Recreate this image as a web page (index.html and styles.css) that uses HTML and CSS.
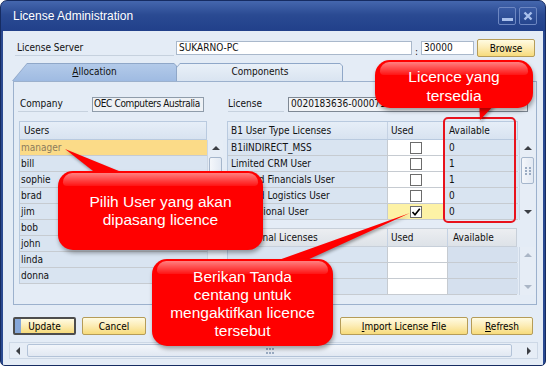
FILE: index.html
```html
<!DOCTYPE html>
<html lang="en">
<head>
    <meta charset="UTF-8">
    <title>License Administration</title>
    <link rel="stylesheet" href="styles.css">
</head>
<body>
    <div class="window">
        <div class="titlebar">
            <span class="title">License Administration</span>
            <div class="caption-btn"><span class="min-glyph"></span></div>
            <div class="caption-btn">
                <svg width="10" height="10" viewBox="0 0 10 10"><path d="M1.5 1.5 L8.5 8.5 M8.5 1.5 L1.5 8.5" stroke="#a9c0ec" stroke-width="2.4"/></svg>
            </div>
        </div>

        <div class="client">
            <div class="server-row">
                <div class="field-label server-label">License Server</div>
                <div class="field server-field">SUKARNO-PC</div>
                <div class="colon">:</div>
                <div class="field port-field">30000</div>
                <button class="btn browse">Browse</button>
            </div>

            <div class="tabs">
                <div class="tab active"><div class="tab-inner"><u>A</u>llocation</div></div>
                <div class="tab"><div class="tab-inner">Components</div></div>
            </div>

            <div class="panel">
                <div class="company-row">
                    <div class="field-label co-label">Company</div>
                    <div class="field co-field">OEC Computers Australia</div>
                    <div class="field-label lic-label">License</div>
                    <div class="field lic-field">0020183636-0000713142</div>
                </div>

                <div class="lists">
                    <div class="users">
                        <div class="head users-head">Users</div>
                        <div class="user-list">
                            <div class="row selected">manager</div>
                            <div class="row">bill</div>
                            <div class="row">sophie</div>
                            <div class="row">brad</div>
                            <div class="row">jim</div>
                            <div class="row">bob</div>
                            <div class="row">john</div>
                            <div class="row">linda</div>
                            <div class="row">donna</div>
                        </div>
                        <div class="vscroll">
                            <div class="arrow"><span class="tri up"></span></div>
                            <div class="thumb users-thumb"></div>
                            <div class="track"></div>
                            <div class="arrow"><span class="tri down"></span></div>
                        </div>
                    </div>

                    <div class="licenses">
                        <div class="lic-table">
                            <div class="head cols">
                                <span class="cell">B1 User Type Licenses</span>
                                <span class="cell">Used</span>
                                <span class="cell avail">Available</span>
                            </div>
                            <div class="lic-rows">
                                <div class="cols lrow"><span class="cell">B1iINDIRECT_MSS</span><span class="cell used"><span class="check"></span></span><span class="cell avail">0</span></div>
                                <div class="cols lrow"><span class="cell">Limited CRM User</span><span class="cell used"><span class="check"></span></span><span class="cell avail">1</span></div>
                                <div class="cols lrow"><span class="cell">Limited Financials User</span><span class="cell used"><span class="check"></span></span><span class="cell avail">1</span></div>
                                <div class="cols lrow"><span class="cell">Limited Logistics User</span><span class="cell used"><span class="check"></span></span><span class="cell avail">0</span></div>
                                <div class="cols lrow"><span class="cell">Professional User</span><span class="cell used on"><span class="check"><svg width="10" height="10" viewBox="0 0 10 10"><path d="M1.5 5 L4 7.8 L8.8 1.8" fill="none" stroke="#000" stroke-width="1.7"/></svg></span></span><span class="cell avail">0</span></div>
                            </div>
                            <div class="vscroll">
                                <div class="arrow"><span class="tri up"></span></div>
                                <div class="thumb lic-thumb">
                                    <svg width="6" height="8" viewBox="0 0 6 8"><g fill="#9aabc2"><rect x="0" y="0" width="2" height="2"/><rect x="4" y="0" width="2" height="2"/><rect x="0" y="3" width="2" height="2"/><rect x="4" y="3" width="2" height="2"/><rect x="0" y="6" width="2" height="2"/><rect x="4" y="6" width="2" height="2"/></g></svg>
                                </div>
                                <div class="track"></div>
                                <div class="arrow"><span class="tri down"></span></div>
                            </div>
                        </div>

                        <div class="lic-table extra">
                            <div class="head cols">
                                <span class="cell">Additional Licenses</span>
                                <span class="cell">Used</span>
                                <span class="cell avail">Available</span>
                            </div>
                            <div class="lic-rows">
                                <div class="cols lrow"><span class="cell"></span><span class="cell used"></span><span class="cell avail"></span></div>
                                <div class="cols lrow"><span class="cell"></span><span class="cell used"></span><span class="cell avail"></span></div>
                                <div class="cols lrow"><span class="cell"></span><span class="cell used"></span><span class="cell avail"></span></div>
                            </div>
                            <div class="vscroll">
                                <div class="arrow"><span class="tri up off"></span></div>
                                <div class="track"></div>
                                <div class="arrow"><span class="tri down off"></span></div>
                            </div>
                        </div>
                    </div>
                </div>
            </div>

            <div class="actions">
                <div class="btn-group">
                    <button class="btn default update">Update</button>
                    <button class="btn cancel">Cancel</button>
                </div>
                <div class="btn-group tight">
                    <button class="btn import"><u>I</u>mport License File</button>
                    <button class="btn refresh"><u>R</u>efresh</button>
                </div>
            </div>

            <div class="hscroll">
                <div class="h-arrow"><span class="tri left"></span></div>
                <div class="h-thumb">
                    <svg width="8" height="6" viewBox="0 0 8 6"><g fill="#9aabc2"><rect x="0" y="0" width="2" height="2"/><rect x="3" y="0" width="2" height="2"/><rect x="6" y="0" width="2" height="2"/><rect x="0" y="4" width="2" height="2"/><rect x="3" y="4" width="2" height="2"/><rect x="6" y="4" width="2" height="2"/></g></svg>
                </div>
                <div class="h-arrow"><span class="tri right"></span></div>
            </div>
        </div>

        <!-- annotations drawn over the dialog -->
        <div class="highlight"></div>
        <svg class="tails" width="546" height="366" viewBox="0 0 546 366">
            <g fill="#ff0000">
                <polygon points="479,98 501,98 480,120"/>
                <polygon points="65,149 102,178 136,178"/>
                <polygon points="410,213 262,266 294,266"/>
            </g>
        </svg>
        <div class="callout c1">Licence yang<br>tersedia</div>
        <div class="callout c2">Pilih User yang akan<br>dipasang licence</div>
        <div class="callout c3">Berikan Tanda<br>centang untuk<br>mengaktifkan licence<br>tersebut</div>
    </div>
</body>
</html>
```

FILE: styles.css
```css
* {
    box-sizing: border-box;
}
body {
    margin: 0;
    width: 546px;
    height: 366px;
    overflow: hidden;
    background: #ffffff;
    font-family: "DejaVu Sans Condensed", "Liberation Sans", sans-serif;
    font-size: 10px;
    color: #111;
}
.window {
    position: relative;
    width: 546px;
    height: 366px;
    border: 1px solid #162c62;
    border-radius: 7px 7px 5px 5px;
    background: linear-gradient(#4567ae, #2a4a92 14px, #21408a 30px, #2a4a91 31px);
    overflow: hidden;
}

/* Title bar */
.titlebar {
    height: 30px;
    display: flex;
    align-items: center;
    padding: 0 8px 0 12px;
}
.title {
    flex: 1;
    color: #fff;
    font-family: "Liberation Sans", sans-serif;
    font-size: 12px;
}
.caption-btn {
    width: 18px;
    height: 18px;
    margin-left: 3px;
    border: 1px solid #6d87c2;
    border-radius: 2px;
    background: linear-gradient(#3a5ba4, #25458d);
    display: flex;
    align-items: center;
    justify-content: center;
}
.min-glyph {
    width: 11px;
    height: 3px;
    background: #a9c0ec;
    align-self: flex-end;
    margin-bottom: 3px;
}

/* Client area */
.client {
    margin: 0 2px;
    height: 334px;
    background: #e4ecf6;
    overflow: hidden;
}
.server-row {
    display: flex;
    align-items: center;
    height: 18px;
    margin: 8px 0 0 12px;
}
.field-label {
    height: 15px;
    line-height: 14px;
    padding-left: 2px;
    border-bottom: 1px solid #c6d1de;
}
.server-label {
    width: 159px;
}
.field {
    height: 14px;
    line-height: 12px;
    padding-left: 2px;
    border: 1px solid #a9b8cb;
    background: #fff;
    white-space: nowrap;
    overflow: hidden;
}
.server-field {
    margin-left: 2px;
    width: 236px;
}
.colon {
    width: 9px;
    text-align: center;
    align-self: flex-end;
}
.port-field {
    width: 53px;
}

/* Buttons */
.btn {
    height: 18px;
    padding: 0;
    border: 1px solid #b59c58;
    border-radius: 2px;
    background: linear-gradient(#fffbe2, #fcedb8 45%, #f7db7b);
    font-family: inherit;
    font-size: 10px;
    color: #000;
}
.browse {
    margin-left: 3px;
    width: 58px;
}

/* Tabs */
.tabs {
    display: flex;
    height: 18px;
    margin: 6px 0 0 9px;
}
.tab {
    position: relative;
    height: 18px;
    padding: 1px 1px 0 1px;
    background: #8fa7c8;
    clip-path: polygon(15px 0, calc(100% - 3px) 0, 100% 3px, 100% 100%, 0 100%);
}
.tab-inner {
    height: 17px;
    line-height: 16px;
    text-align: center;
    background: linear-gradient(#e9f0f8, #d9e4f1);
    clip-path: polygon(14px 0, calc(100% - 2px) 0, 100% 2px, 100% 100%, 0 100%);
}
.tab.active {
    z-index: 2;
    width: 165px;
}
.tab.active .tab-inner {
    background: linear-gradient(#b3cae9, #9fbbe2);
}
.tab:not(.active) {
    width: 178px;
    margin-left: -12px;
}
.tab:not(.active) .tab-inner {
    padding-left: 12px;
}

/* Panel */
.panel {
    height: 224px;
    margin: 0 6px 0 10px;
    padding: 14px 0 0 4px;
    border: 1px solid #9cb1cd;
}
.company-row {
    display: flex;
    align-items: center;
    height: 16px;
}
.co-label {
    width: 70px;
    margin-right: 4px;
}
.co-field {
    width: 112px;
    height: 15px;
    padding-left: 1px;
    letter-spacing: -0.35px;
    background: #eef1f5;
    border-color: #8f9caa;
}
.lic-label {
    width: 56px;
    margin: 0 4px 0 24px;
    padding-left: 0;
}
.lic-field {
    width: 240px;
    height: 15px;
    background: #f1f3f6;
    border-color: #7e8894;
}
.lists {
    display: flex;
    gap: 4px;
    margin-top: 9px;
    padding-left: 1px;
}

/* Users list */
.users {
    display: grid;
    grid-template-columns: 188px 16px;
    grid-template-rows: 19px 144px;
}
.head {
    height: 19px;
    line-height: 17px;
    border: 1px solid #b9cadf;
    background: linear-gradient(#e6eef8, #d8e3f0);
}
.users-head {
    padding-left: 4px;
}
.user-list {
    grid-column: 1;
    border-left: 1px solid #b9cadf;
}
.row {
    height: 16px;
    line-height: 15px;
    padding-left: 1px;
    background: #d9e4f1;
    border-bottom: 1px solid #c6cbd1;
}
.row.selected {
    background: #fbdb88;
    color: #8c7c5c;
}

/* Scrollbars */
.vscroll {
    grid-column: 2;
    grid-row: 2;
    display: flex;
    flex-direction: column;
    background: #e6edf6;
    border-left: 1px solid #ccd7e5;
}
.arrow {
    height: 16px;
    display: flex;
    align-items: center;
    justify-content: center;
}
.track {
    flex: 1;
}
.thumb {
    margin: 1px 1px 0 1px;
    border: 1px solid #a5b6cc;
    border-radius: 2px;
    background: linear-gradient(90deg, #f4f7fb, #e2e9f3);
    display: flex;
    align-items: center;
    justify-content: center;
}
.users-thumb {
    height: 34px;
}
.lic-thumb {
    height: 27px;
}
.tri {
    width: 0;
    height: 0;
    border: 4px solid transparent;
}
.tri.up {
    border-bottom: 4px solid #3c3f44;
    border-top-width: 0;
}
.tri.down {
    border-top: 4px solid #3c3f44;
    border-bottom-width: 0;
}
.tri.up.off {
    border-bottom-color: #aab6c6;
}
.tri.down.off {
    border-top-color: #aab6c6;
}
.tri.left {
    border-right: 4px solid #3c3f44;
    border-left-width: 0;
}
.tri.right {
    border-left: 4px solid #3c3f44;
    border-right-width: 0;
}

/* License tables */
.licenses {
    width: 308px;
}
.lic-table {
    display: grid;
    grid-template-columns: 291px 16px;
    column-gap: 1px;
}
.cols {
    display: grid;
    grid-template-columns: 160px 56px 75px;
}
.head.cols {
    padding: 0;
}
.head .cell {
    border-right: 1px solid #c5d2e3;
}
.head .cell:last-child {
    border-right: none;
}
.cell {
    padding-left: 3px;
    white-space: nowrap;
    overflow: hidden;
}
.cell.avail {
    padding-left: 5px;
}
.lic-rows {
    grid-column: 1;
    border-left: 1px solid #b9cadf;
}
.lrow {
    height: 16px;
    line-height: 15px;
    border-bottom: 1px solid #c6cbd1;
}
.lrow .cell {
    background: #d9e4f1;
    border-right: 1px solid #c6cbd1;
}
.lrow .cell.used {
    background: #fff;
    display: flex;
    align-items: center;
    justify-content: center;
    padding: 0;
}
.lrow .cell.used.on {
    background: #fdf2a6;
}
.lrow .cell:last-child {
    border-right: none;
}
.check {
    width: 12px;
    height: 12px;
    border: 1px solid #6c6c6c;
    background: #fff;
    display: flex;
    align-items: center;
    justify-content: center;
}
.extra {
    margin-top: 8px;
    column-gap: 2px;
    grid-template-columns: 290px 16px;
}
.extra .cols {
    grid-template-columns: 160px 60px 70px;
}
.extra .head {
    background: linear-gradient(#eceef1, #dde2e8);
    border-color: #c7cfd9;
}
.extra .lrow .cell.avail {
    background: #d5e0ee;
}

/* Bottom buttons */
.actions {
    display: flex;
    justify-content: space-between;
    margin: 12px 10px 0 10px;
}
.btn-group {
    display: flex;
    gap: 6px;
}
.btn-group.tight {
    gap: 3px;
}
.update {
    width: 63px;
}
.btn.default {
    border: 2px solid #4d4d4d;
    background: linear-gradient(90deg, #86a7d9 0 6px, transparent 6px),
                linear-gradient(#fffbe2, #fcedb8 45%, #f7db7b);
}
.cancel {
    width: 64px;
}
.import {
    width: 128px;
}
.refresh {
    width: 62px;
}
.hscroll {
    display: flex;
    height: 17px;
    margin: 7px 5px 0 6px;
    background: #e6edf6;
    border: 1px solid #cdd8e6;
}
.h-arrow {
    width: 16px;
    display: flex;
    align-items: center;
    justify-content: center;
}
.h-thumb {
    flex: 1;
    margin: 1px 9px 1px 1px;
    border: 1px solid #b3c3d8;
    border-radius: 2px;
    background: linear-gradient(#f3f6fb, #e1e8f2);
    display: flex;
    align-items: center;
    justify-content: center;
}

/* Annotations */
.highlight {
    position: absolute;
    left: 442px;
    top: 116px;
    width: 73px;
    height: 106px;
    border: 2px solid #e8121c;
    border-radius: 5px;
}
.tails {
    position: absolute;
    left: -1px;
    top: -1px;
    filter: drop-shadow(1px 2px 1.5px rgba(0, 0, 0, 0.35));
}
.callout {
    position: absolute;
    display: flex;
    align-items: center;
    justify-content: center;
    text-align: center;
    background: #ff0000;
    border-radius: 15px;
    box-shadow: 1px 3px 4px rgba(0, 0, 0, 0.35);
    color: #fff;
    font-family: "Liberation Sans", sans-serif;
    font-size: 15.5px;
    line-height: 18px;
}
.callout::before {
    content: "";
    position: absolute;
    top: 2px;
    left: 5px;
    right: 5px;
    height: 13px;
    border-radius: 12px 12px 5px 5px;
    background: linear-gradient(rgba(255, 255, 255, 0.5), rgba(255, 255, 255, 0.08));
}
.c1 {
    left: 374px;
    top: 59px;
    width: 158px;
    height: 48px;
    padding-top: 3px;
    line-height: 19px;
}
.c2 {
    left: 57px;
    top: 170px;
    width: 205px;
    height: 79px;
}
.c3 {
    left: 151px;
    top: 258px;
    width: 181px;
    height: 87px;
    padding-top: 3px;
}
```
